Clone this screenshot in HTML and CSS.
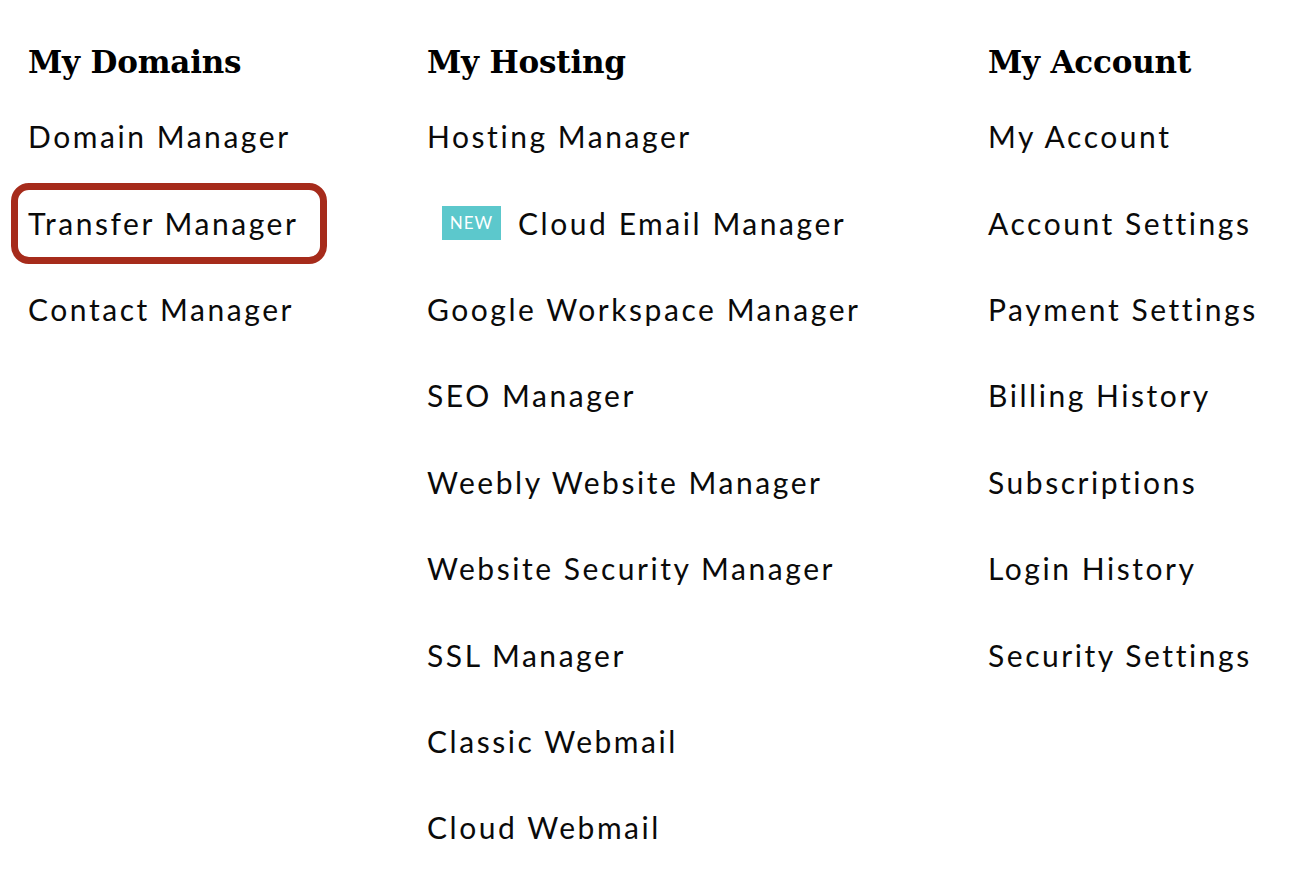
FILE: index.html
```html
<!DOCTYPE html>
<html lang="en">
<head>
<meta charset="utf-8">
<title>Menu</title>
<link rel="stylesheet" href="styles.css">
</head>
<body>
<div class="menu">
  <section class="col col-domains">
    <h2 class="heading">My Domains</h2>
    <ul class="list">
      <li class="item"><span class="label">Domain Manager</span></li>
      <li class="item"><span class="label highlighted">Transfer Manager</span></li>
      <li class="item"><span class="label">Contact Manager</span></li>
    </ul>
  </section>
  <section class="col col-hosting">
    <h2 class="heading">My Hosting</h2>
    <ul class="list">
      <li class="item"><span class="label">Hosting Manager</span></li>
      <li class="item item-new"><span class="badge">NEW</span><span class="label">Cloud Email Manager</span></li>
      <li class="item"><span class="label">Google Workspace Manager</span></li>
      <li class="item"><span class="label">SEO Manager</span></li>
      <li class="item"><span class="label">Weebly Website Manager</span></li>
      <li class="item"><span class="label">Website Security Manager</span></li>
      <li class="item"><span class="label">SSL Manager</span></li>
      <li class="item"><span class="label">Classic Webmail</span></li>
      <li class="item"><span class="label">Cloud Webmail</span></li>
    </ul>
  </section>
  <section class="col col-account">
    <h2 class="heading">My Account</h2>
    <ul class="list">
      <li class="item"><span class="label">My Account</span></li>
      <li class="item"><span class="label">Account Settings</span></li>
      <li class="item"><span class="label">Payment Settings</span></li>
      <li class="item"><span class="label">Billing History</span></li>
      <li class="item"><span class="label">Subscriptions</span></li>
      <li class="item"><span class="label">Login History</span></li>
      <li class="item"><span class="label">Security Settings</span></li>
    </ul>
  </section>
</div>
</body>
</html>
```
FILE: styles.css
```css
html, body {
  margin: 0;
  padding: 0;
  background: #ffffff;
}

body {
  color: #0a0a0a;
  font-family: "Lato", "Liberation Sans", sans-serif;
}

.menu {
  display: grid;
  grid-template-columns: 399px 561px 1fr;
  padding: 42px 0 0 28px;
}

.heading {
  margin: 0;
  font-family: "DejaVu Serif", "Liberation Serif", serif;
  font-weight: 700;
  font-size: 31px;
  line-height: 40px;
  letter-spacing: -0.2px;
  color: #000;
}

.list {
  list-style: none;
  margin: 11px 0 0 0;
  padding: 0;
}

.item {
  display: flex;
  align-items: center;
  height: 86.4px;
  font-size: 30px;
  letter-spacing: 2.55px;
  color: #0a0a0a;
}

.label {
  position: relative;
  line-height: 40px;
}

.highlighted::after {
  content: "";
  position: absolute;
  left: -17px;
  right: -29px;
  top: -20px;
  bottom: -21px;
  border: 7px solid #a62b1b;
  border-radius: 18px;
}

.item-new {
  padding-left: 15px;
  gap: 17px;
}

.badge {
  display: inline-flex;
  align-items: center;
  justify-content: center;
  width: 59px;
  height: 34px;
  background: #5cc8cc;
  color: #ffffff;
  font-size: 17px;
  font-weight: 400;
  letter-spacing: 1px;
}
```
